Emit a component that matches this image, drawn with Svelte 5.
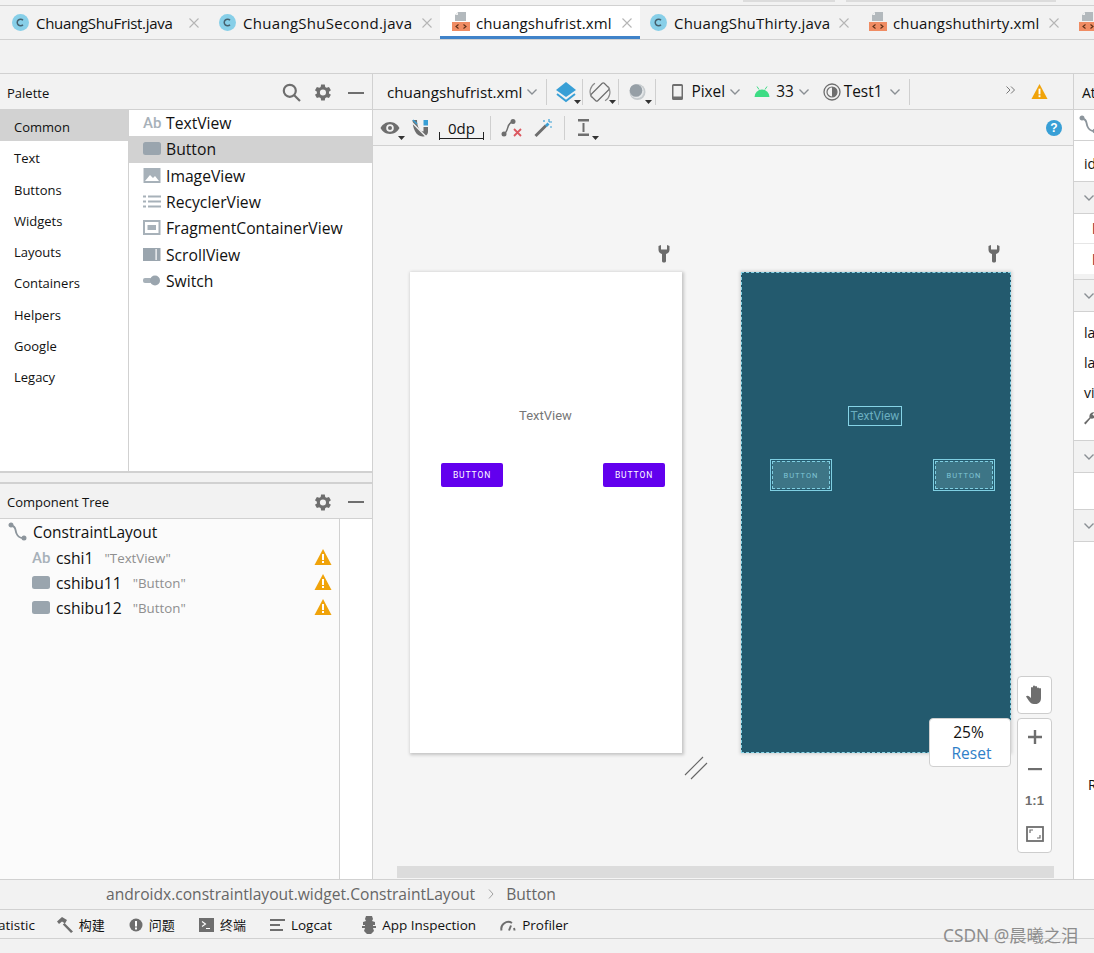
<script>
  const tabs = [
    { name: 'ChuangShuFrist.java', kind: 'java', w: 207, ls: -0.3 },
    { name: 'ChuangShuSecond.java', kind: 'java', w: 233, ls: 0.3 },
    { name: 'chuangshufrist.xml', kind: 'xml', w: 200, ls: 0.1 },
    { name: 'ChuangShuThirty.java', kind: 'java', w: 217, ls: 0.2, pad: 10 },
    { name: 'chuangshuthirty.xml', kind: 'xml', w: 210, ls: 0.15 },
    { name: '', kind: 'xml', w: 27 }
  ];
  const activeTab = 2;
  const categories = ['Common', 'Text', 'Buttons', 'Widgets', 'Layouts', 'Containers', 'Helpers', 'Google', 'Legacy'];
  const widgets = [
    { name: 'TextView', icon: 'ab' },
    { name: 'Button', icon: 'btn', selected: true },
    { name: 'ImageView', icon: 'img' },
    { name: 'RecyclerView', icon: 'list' },
    { name: 'FragmentContainerView', icon: 'frag' },
    { name: 'ScrollView', icon: 'scroll' },
    { name: 'Switch', icon: 'switch' }
  ];
  const tree = [
    { id: 'cshi1', text: '"TextView"', icon: 'ab' },
    { id: 'cshibu11', text: '"Button"', icon: 'btn' },
    { id: 'cshibu12', text: '"Button"', icon: 'btn' }
  ];
</script>

{#snippet widgetIcon(kind)}
  {#if kind === 'ab'}
    <span class="ab">Ab</span>
  {:else}
    <svg class="wicon" width="18" height="16" viewBox="0 0 18 16">
      {#if kind === 'btn'}
        <rect x="0" y="1" width="18" height="13" rx="2.500" fill="#9aa5ae" />
      {:else if kind === 'img'}
        <rect x="0.500" y="0" width="17" height="15" fill="#a7b1b9" />
        <path d="M2 13 L7 7 L10 10 L12 8 L16 13 Z" fill="#fff" />
      {:else if kind === 'list'}
        <path d="M0 1.500h3v2h-3zM5 1.500h13v2h-13zM0 6.500h3v2h-3zM5 6.500h13v2h-13zM0 11.500h3v2h-3zM5 11.500h13v2h-13z" fill="#a7b1b9" />
      {:else if kind === 'frag'}
        <path fill-rule="evenodd" d="M0 0h17.500v15h-17.500zM2 2v11h13.500v-11z" fill="#a7b1b9" />
        <rect x="4.500" y="5" width="8.500" height="5" fill="#a7b1b9" />
      {:else if kind === 'scroll'}
        <path d="M0 1h17.500v13h-17.500z" fill="#9aa5ae" />
        <rect x="12.500" y="2" width="1.200" height="11" fill="#fff" />
      {:else if kind === 'switch'}
        <rect x="0" y="5" width="9" height="5" rx="2" fill="#a7b1b9" />
        <circle cx="12" cy="7.500" r="5" fill="#9aa5ae" />
      {/if}
    </svg>
  {/if}
{/snippet}

{#snippet gear()}
  <svg width="21" height="21" viewBox="0 0 24 24">
    <path fill="#6e6e6e" d="M19.400 13a7.500 7.500 0 0 0 0-2l2.200-1.700-2.200-3.700-2.600 1a7.500 7.500 0 0 0-1.700-1L14.600 2.800h-4.200l-.5 2.800a7.500 7.500 0 0 0-1.700 1l-2.600-1-2.200 3.700L5.600 11a7.500 7.500 0 0 0 0 2l-2.200 1.700 2.200 3.700 2.600-1a7.500 7.500 0 0 0 1.700 1l.5 2.800h4.200l.5-2.800a7.500 7.500 0 0 0 1.700-1l2.600 1 2.200-3.700zM12.500 15.500a3.500 3.500 0 1 1 0-7 3.500 3.500 0 0 1 0 7z" />
  </svg>
{/snippet}

{#snippet warn(size)}
  <svg width={size} height={size} viewBox="0 0 18 18">
    <path d="M9 1 L17.500 17 H0.500 Z" fill="#f0a30a" />
    <rect x="8" y="6" width="2" height="6" fill="#fff" />
    <rect x="8" y="13" width="2" height="2" fill="#fff" />
  </svg>
{/snippet}

{#snippet layoutIcon()}
  <svg width="20" height="20" viewBox="0 0 20 20" fill="none" stroke="#8c959c" stroke-width="1.800">
    <circle cx="3" cy="3" r="1.600" fill="#8c959c" />
    <path d="M4 4 C8 4 7 8 8.500 11.500 C10 15 12 16 15 16" />
    <circle cx="16" cy="16" r="1.600" fill="#8c959c" />
  </svg>
{/snippet}

{#snippet chevron()}
  <svg class="chev" width="10" height="6" viewBox="0 0 10 6" fill="none" stroke="#8a8f94" stroke-width="1.400"><path d="M0.500 0.500 L5 5 L9.500 0.500" /></svg>
{/snippet}

{#snippet wrench()}
  <svg width="12" height="18" viewBox="0 0 12 18"><path fill="#6b6b6b" d="M0.500 1 V5 C0.500 7.500 2.500 8.500 4 9 V16 C4 18 8 18 8 16 V9 C9.500 8.500 11.500 7.500 11.500 5 V1 L9 0 V4.500 H3 V0 Z" /></svg>
{/snippet}

{#snippet caret()}
  <svg class="caret" width="7" height="4" viewBox="0 0 7 4"><path d="M0 0h7l-3.500 4z" fill="#333" /></svg>
{/snippet}

<div class="ide">
  <div class="topstrip">
    <span class="stub a"></span>
    <span class="stub b"></span>
  </div>

  <div class="tabs">
    {#each tabs as tab, i}
      <div class="tab" class:active={i === activeTab} style="width: {tab.w}px; padding-left: {tab.pad ?? 12}px">
        {#if tab.kind === 'java'}
          <svg width="17" height="17" viewBox="0 0 17 17" class="ticon">
            <circle cx="8.500" cy="8.500" r="8.500" fill="#87cfe8" />
            <path d="M11 6.300 A3.300 3.300 0 1 0 11 10.700" fill="none" stroke="#45606e" stroke-width="1.500" />
          </svg>
        {:else}
          <svg width="18" height="20" viewBox="0 0 18 20" class="ticon xml">
            <path d="M6 0 H14 V9 H3 V3 Z" fill="#b3b9bd" />
            <path d="M6 0 V3 H3 Z" fill="#f2f2f2" />
            <rect x="0" y="10" width="18" height="9" fill="#f08c63" />
            <path d="M6.500 12.500 L4 14.500 L6.500 16.500 M11.500 12.500 L14 14.500 L11.500 16.500" fill="none" stroke="#5b2f18" stroke-width="1.100" />
          </svg>
        {/if}
        {#if tab.name}
          <span class="tname" style="letter-spacing: {tab.ls}px">{tab.name}</span>
          <svg class="tclose" width="10" height="10" viewBox="0 0 10 10" stroke="#b5b5b5" stroke-width="1.100"><path d="M0.500 0.500 L9.500 9.500 M9.500 0.500 L0.500 9.500" /></svg>
        {/if}
      </div>
    {/each}
  </div>

  <div class="toolstrip"></div>

  <div class="main">
    <aside class="left">
      <div class="phead pal-head">
        <span class="ptitle">Palette</span>
        <span class="hicons">
          <svg class="search" width="19" height="19" viewBox="0 0 19 19" fill="none" stroke="#6e6e6e" stroke-width="2.200"><circle cx="7.800" cy="7.800" r="6" /><path d="M12 12 L18 18" /></svg>
          {@render gear()}
          <span class="minus"></span>
        </span>
      </div>
      <div class="palette">
        <ul class="cats">
          {#each categories as c, i}
            <li class:sel={i === 0}>{c}</li>
          {/each}
        </ul>
        <ul class="widgets">
          {#each widgets as w}
            <li class:sel={w.selected}>
              <span class="wslot">{@render widgetIcon(w.icon)}</span>
              {w.name}
            </li>
          {/each}
        </ul>
      </div>
      <div class="splitter"></div>
      <div class="phead tree-head">
        <span class="ptitle">Component Tree</span>
        <span class="hicons">
          {@render gear()}
          <span class="minus"></span>
        </span>
      </div>
      <div class="treebody">
        <div class="treelist">
          <div class="troot">
            {@render layoutIcon()}
            <span>ConstraintLayout</span>
          </div>
          {#each tree as t}
            <div class="trow">
              <span class="wslot">{@render widgetIcon(t.icon)}</span>
              <span class="tid">{t.id}</span>
              <span class="ttext">{t.text}</span>
              <span class="twarn">{@render warn(18)}</span>
            </div>
          {/each}
        </div>
        <div class="gutter"></div>
      </div>
    </aside>

    <section class="center">
      <div class="bar one">
        <span class="file">chuangshufrist.xml {@render chevron()}</span>
        <span class="sep s1"></span>
        <span class="tool layers">
          <svg width="24" height="24" viewBox="0 0 24 24">
            <path d="M12 2 L22 10 L12 17 L2 10 Z" fill="#389fd6" />
            <path d="M3 14 L12 21 L21 14" fill="none" stroke="#389fd6" stroke-width="2" />
          </svg>
          {@render caret()}
        </span>
        <span class="sep s2"></span>
        <span class="tool rotate">
          <svg width="22" height="24" viewBox="0 0 24 26" fill="none" stroke="#6e6e6e" stroke-width="1.300">
            <rect x="7" y="3" width="10" height="20" rx="1.500" transform="rotate(45 12 13)" />
            <path d="M3 19 A11 11 0 0 1 6.500 3.500 M21 7 A11 11 0 0 1 17.500 22.500" stroke="#8a8a8a" />
          </svg>
          {@render caret()}
        </span>
        <span class="sep s3"></span>
        <span class="tool moon">
          <svg width="20" height="20" viewBox="0 0 20 20">
            <circle cx="9.500" cy="10" r="8" fill="#c6cbce" />
            <circle cx="9" cy="9.500" r="6.800" fill="#e4e7e9" />
            <circle cx="8" cy="8.500" r="6.300" fill="#969fa6" />
          </svg>
          {@render caret()}
        </span>
        <span class="sep s4"></span>
        <span class="dev pixel">
          <svg width="11" height="16" viewBox="0 0 11 16"><path fill-rule="evenodd" d="M1.500 0h8A1.500 1.500 0 0 1 11 1.500v13A1.500 1.500 0 0 1 9.500 16h-8A1.500 1.500 0 0 1 0 14.500v-13A1.500 1.500 0 0 1 1.500 0zM1.500 2v10.500h8V2z" fill="#6e6e6e" /></svg>
          Pixel {@render chevron()}
        </span>
        <span class="dev api">
          <svg width="16" height="11" viewBox="0 0 16 11">
            <path d="M0.500 11 A7.500 7.500 0 0 1 15.500 11 Z" fill="#3ddc84" />
            <path d="M3 0.500 L5 3.500 M13 0.500 L11 3.500" stroke="#3ddc84" stroke-width="1" />
          </svg>
          33 {@render chevron()}
        </span>
        <span class="dev theme">
          <svg width="18" height="18" viewBox="0 0 18 18">
            <circle cx="9" cy="9" r="8" fill="none" stroke="#6e6e6e" stroke-width="1.300" />
            <path d="M9 4 A5 5 0 0 1 9 14 Z" fill="#6e6e6e" />
            <circle cx="9" cy="9" r="5" fill="none" stroke="#6e6e6e" stroke-width="1.200" />
          </svg>
          Test1 {@render chevron()}
        </span>
        <span class="sep s5"></span>
        <svg class="more" width="9" height="8" viewBox="0 0 9 8" fill="none" stroke="#777" stroke-width="1"><path d="M0.500 0.500 L4 4 L0.500 7.500 M5 0.500 L8.500 4 L5 7.500" /></svg>
        <span class="barwarn">{@render warn(17)}</span>
      </div>

      <div class="bar two">
        <span class="t2 eye">
          <svg width="20" height="14" viewBox="0 0 20 14"><path fill-rule="evenodd" d="M10 1C5.500 1 2 4 0.500 7 2 10 5.500 13 10 13s8-3 9.500-6C18 4 14.500 1 10 1zm0 9.800a3.800 3.800 0 1 1 0-7.600 3.800 3.800 0 0 1 0 7.600z" fill="#6e6e6e" /><circle cx="10" cy="7" r="2" fill="#6e6e6e" /></svg>
          {@render caret()}
        </span>
        <span class="t2 magnet">
          <svg width="18" height="18" viewBox="0 0 18 18">
            <path d="M1.500 1 H6 C6 8 9 12.500 12.500 12.500 V8 H17 V12.500 C17 16 14.500 17.500 11.500 17.500 C5 17.500 1.500 9 1.500 1 Z" fill="#6e6e6e" />
            <path d="M0.500 3 L15 17.500" stroke="#f2f2f2" stroke-width="1.400" />
            <rect x="12.500" y="1" width="4.500" height="5.500" fill="#389fd6" />
            <path d="M2 1 L6 5" stroke="#389fd6" stroke-width="1.400" />
          </svg>
        </span>
        <span class="margin">0dp</span>
        <span class="sep short first-short"></span>
        <span class="t2 wire">
          <svg width="22" height="20" viewBox="0 0 22 20">
            <path d="M2 16 C8 16 5 4 12 4" fill="none" stroke="#6e6e6e" stroke-width="1.500" />
            <circle cx="3" cy="16" r="2.500" fill="#6e6e6e" /><circle cx="12" cy="3.500" r="2.500" fill="#6e6e6e" />
            <path d="M13 11 L20 18 M20 11 L13 18" stroke="#db5860" stroke-width="1.800" />
          </svg>
        </span>
        <span class="t2 wand">
          <svg width="20" height="20" viewBox="0 0 20 20">
            <path d="M1.500 18 L12 7.500" stroke="#6e6e6e" stroke-width="3" />
            <path d="M11 7 L13.500 4.500 L15.500 6.500 L13 9 Z" fill="#389fd6" />
            <path d="M15 1v3M18 4h-3M18 9h-2M10 2v2" stroke="#389fd6" stroke-width="1.200" />
          </svg>
        </span>
        <span class="sep short second-short"></span>
        <span class="t2 guide">
          <svg width="12" height="20" viewBox="0 0 12 20"><path d="M0 1h11v2.500H0zM0 15.500h11V18H0zM4.500 5h2v9h-2z" fill="#6e6e6e" /></svg>
          {@render caret()}
        </span>
        <svg class="help" width="16" height="16" viewBox="0 0 16 16"><circle cx="8" cy="8" r="8" fill="#389fd6" /><text x="8" y="12" text-anchor="middle" font-size="12" font-weight="700" fill="#fff" font-family="Liberation Sans, sans-serif">?</text></svg>
      </div>

      <div class="canvas">
        <span class="wr w1">{@render wrench()}</span>
        <span class="wr w2">{@render wrench()}</span>

        <div class="screen design">
          <span class="dtext">TextView</span>
          <span class="dbtn b1">BUTTON</span>
          <span class="dbtn b2">BUTTON</span>
        </div>
        <svg class="resize" width="24" height="24" viewBox="0 0 24 24" stroke="#666" stroke-width="1.100"><path d="M1 19 L19 1 M7 23 L23 7" /></svg>

        <div class="screen blueprint">
          <span class="btext">TextView</span>
          <span class="bbtn b1"><span>BUTTON</span></span>
          <span class="bbtn b2"><span>BUTTON</span></span>
        </div>

        <div class="zoomlabel">
          <span class="pct">25%</span>
          <span class="reset">Reset</span>
        </div>

        <div class="zbox hand">
          <svg width="22" height="22" viewBox="0 0 22 22"><path fill="#6e6e6e" d="M7 10V4a1 1 0 0 1 2 0V2.500a1 1 0 0 1 2 0V3a1 1 0 0 1 2 0v1.500a1 1 0 0 1 2 0V5a1 1 0 0 1 2 0v9c0 3.500-2 6-5.500 6H10c-2.500 0-3.500-1-5-3L2 12.500c.8-1.300 2.300-1 3.300 0L7 14z" /></svg>
        </div>
        <div class="zbox controls">
          <svg width="14" height="14" viewBox="0 0 14 14"><path d="M5.800 0h2.400v5.800H14v2.400H8.200V14H5.800V8.200H0V5.800h5.800z" fill="#6e6e6e" /></svg>
          <svg width="14" height="14" viewBox="0 0 14 14"><rect y="6" width="14" height="2.200" fill="#6e6e6e" /></svg>
          <span class="one1">1:1</span>
          <svg width="18" height="16" viewBox="0 0 18 16"><rect x="1" y="1" width="16" height="14" fill="none" stroke="#6e6e6e" stroke-width="1.800" /><path d="M4 7V4h3M14 9v3h-3" fill="none" stroke="#6e6e6e" stroke-width="1.200" /></svg>
        </div>

        <div class="hscroll"></div>
      </div>
    </section>

    <aside class="attrs">
      <div class="ahead">At</div>
      <div class="arow icon">{@render layoutIcon()}</div>
      <div class="arow idrow">id</div>
      <div class="asec">{@render chevron()}</div>
      <div class="arow red">l</div>
      <div class="arow red last">l</div>
      <div class="asec">{@render chevron()}</div>
      <div class="ablock">
        <span>la</span>
        <span>la</span>
        <span>vi</span>
        <svg width="14" height="14" viewBox="0 0 14 14"><path d="M1 12 L6.500 6.500 C5.800 3.500 8 0.800 11.500 1.300 L9.300 3.500 L10.500 4.800 L12.800 2.600 C13.300 6 10.500 8.300 7.500 7.500 L2.500 13.500 Z" fill="#6b6b6b" /></svg>
      </div>
      <div class="asec">{@render chevron()}</div>
      <div class="ablank"></div>
      <div class="asec">{@render chevron()}</div>
      <div class="arest"><span>R</span></div>
    </aside>
  </div>

  <div class="crumbs">
    <span>androidx.constraintlayout.widget.ConstraintLayout</span>
    <svg width="6" height="10" viewBox="0 0 6 10" fill="none" stroke="#a0a0a0" stroke-width="1"><path d="M1 0.500 L5 5 L1 9.500" /></svg>
    <span class="crumb-last">Button</span>
  </div>

  <div class="status">
    <span class="st first">atistic</span>
    <span class="st cjk hammer">
      <svg width="17" height="16" viewBox="0 0 17 16"><path d="M0 4.500 L5 0 L10 3 L8 6.500 L5 4.500 L2 7 Z M7.500 6 L16 14.500 L14 16 L5.800 7.500 Z" fill="#6e6e6e" /></svg>
      构建
    </span>
    <span class="st cjk">
      <svg width="14" height="14" viewBox="0 0 14 14"><circle cx="7" cy="7" r="6.500" fill="#6e6e6e" /><rect x="6" y="3" width="2" height="5.500" fill="#fff" /><rect x="6" y="9.500" width="2" height="2" fill="#fff" /></svg>
      问题
    </span>
    <span class="st cjk">
      <svg width="15" height="14" viewBox="0 0 15 14"><rect width="15" height="14" fill="#6e6e6e" /><path d="M3 3.500 L6.500 6 L3 8.500 M7 10.500h4" fill="none" stroke="#fff" stroke-width="1.100" /></svg>
      终端
    </span>
    <span class="st">
      <svg width="15" height="12" viewBox="0 0 15 12"><path d="M0 0h15v2H0zM0 5h10v2H0zM0 10h13v2H0z" fill="#6e6e6e" /></svg>
      Logcat
    </span>
    <span class="st app">
      <svg width="14" height="18" viewBox="0 0 14 18"><path d="M4 0h6l1 3-1 2 3 1v3h-2v1h3v2h-3l1 3-3 3H5l-3-3 1-3H0v-2h3V9H1V6l3-1-1-2z" fill="#6e6e6e" /></svg>
      App Inspection
    </span>
    <span class="st">
      <svg width="16" height="12" viewBox="0 0 16 12" fill="none" stroke="#6e6e6e" stroke-width="2"><path d="M1.500 11.500 A7 7 0 0 1 12 4" /><path d="M9 11.500 L11 6.500" /><path d="M14.500 11.500 A7 7 0 0 0 14 9" /></svg>
      Profiler
    </span>
  </div>

  <div class="bottom"></div>
  <span class="mark">CSDN @晨曦之泪</span>
</div>

<style>
  :global(body) {
    margin: 0;
    overflow: hidden;
  }

  .ide {
    position: relative;
    width: 1094px;
    height: 953px;
    display: flex;
    flex-direction: column;
    overflow: hidden;
    background: #f2f2f2;
    color: #111;
    font-family: "Open Sans", "Noto Sans", "Noto Sans CJK SC", sans-serif;
    font-size: 14px;
  }

  ul {
    list-style: none;
    margin: 0;
    padding: 0;
  }

  svg {
    flex: none;
    display: block;
  }

  /* top */
  .topstrip {
    height: 5px;
    display: flex;
    border-bottom: 1px solid #d1d1d1;
    flex: none;
  }

  .stub {
    height: 2px;
    background: #dcdcdc;
  }

  .stub.a {
    margin-left: 743px;
    width: 92px;
  }

  .stub.b {
    margin-left: 11px;
    width: 210px;
  }

  .tabs {
    height: 33px;
    display: flex;
    flex: none;
    border-bottom: 1px solid #d1d1d1;
  }

  .tab {
    flex: none;
    position: relative;
    display: flex;
    align-items: center;
    box-sizing: border-box;
    font-size: 15px;
  }

  .tab.active {
    background: #fff;
    box-shadow: inset 0 -3px 0 #4083c9;
  }

  .ticon {
    margin-right: 7px;
  }

  .ticon.xml {
    margin-top: -1px;
    margin-right: 6px;
  }

  .tclose {
    margin-left: auto;
    margin-right: 8px;
  }

  .toolstrip {
    height: 33px;
    flex: none;
    border-bottom: 1px solid #d1d1d1;
  }

  .main {
    flex: none;
    height: 805px;
    display: flex;
  }

  /* left */
  .left {
    width: 373px;
    flex: none;
    box-sizing: border-box;
    border-right: 1px solid #d1d1d1;
    display: flex;
    flex-direction: column;
  }

  .phead {
    flex: none;
    box-sizing: border-box;
    border-bottom: 1px solid #d1d1d1;
    display: flex;
    align-items: center;
    justify-content: space-between;
    padding: 2px 8px 0 7px;
  }

  .pal-head {
    height: 36px;
  }

  .tree-head {
    height: 35px;
  }

  .ptitle {
    font-size: 13px;
  }

  .hicons {
    display: flex;
    align-items: center;
    gap: 15px;
  }

  .search {
    margin-right: -4px;
  }

  .minus {
    width: 16px;
    height: 2px;
    background: #6e6e6e;
  }

  .palette {
    height: 361px;
    flex: none;
    display: flex;
    background: #fff;
  }

  .cats {
    width: 129px;
    flex: none;
    box-sizing: border-box;
    border-right: 1px solid #d1d1d1;
    background: #fff;
  }

  .cats li {
    height: 31.250px;
    box-sizing: border-box;
    padding-left: 14px;
    line-height: 34px;
    font-size: 13px;
  }

  .cats li.sel {
    background: #d2d2d2;
  }

  .widgets {
    flex: 1;
  }

  .widgets li {
    height: 26.300px;
    display: flex;
    align-items: center;
    font-size: 15.700px;
    padding-left: 14px;
  }

  .widgets li.sel {
    background: #d2d2d2;
  }

  .wslot {
    width: 23px;
    flex: none;
    display: flex;
    align-items: center;
  }

  .ab {
    color: #a7b1b9;
    font-weight: 500;
    font-size: 15px;
    font-family: Roboto, sans-serif;
  }

  .splitter {
    height: 13px;
    flex: none;
    box-sizing: border-box;
    border-top: 2px solid #d1d1d1;
    border-bottom: 2px solid #d1d1d1;
    background: #f2f2f2;
  }

  .treebody {
    flex: 1;
    display: flex;
    background: #fbfbfb;
  }

  .treelist {
    width: 339px;
    flex: none;
    box-sizing: border-box;
  }

  .gutter {
    flex: 1;
    border-left: 1px solid #d1d1d1;
    background: #fff;
  }

  .troot {
    height: 26px;
    display: flex;
    align-items: center;
    padding-left: 8px;
    gap: 5px;
    font-size: 15.500px;
  }

  .trow {
    height: 25px;
    display: flex;
    align-items: center;
    padding-left: 32px;
    font-size: 15.700px;
    position: relative;
  }

  .wslot + .tid {
    margin-left: 1px;
  }

  .ttext {
    margin-left: 11px;
    margin-top: 1px;
    color: #8f8f8f;
    font-size: 13.300px;
  }

  .twarn {
    position: absolute;
    left: 314px;
    top: 3px;
  }

  /* center */
  .center {
    flex: none;
    width: 701px;
    box-sizing: border-box;
    border-right: 1px solid #d1d1d1;
    display: flex;
    flex-direction: column;
  }

  .bar {
    height: 36px;
    flex: none;
    box-sizing: border-box;
    border-bottom: 1px solid #d1d1d1;
    display: flex;
    align-items: center;
  }

  .file {
    display: flex;
    align-items: center;
    gap: 5px;
    margin-left: 14px;
    font-size: 15.200px;
  }

  .sep {
    width: 1px;
    height: 26px;
    background: #cfcfcf;
    flex: none;
  }

  .sep.short {
    height: 24px;
  }

  .s1 { margin-left: 9px; }
  .s2 { margin-left: 4px; }
  .s3 { margin-left: 5px; }
  .s4 { margin-left: 6px; }
  .s5 { margin-left: 9px; }

  .tool {
    position: relative;
    width: 24px;
    height: 24px;
    flex: none;
  }

  .layers { margin-left: 7px; }
  .rotate { margin-left: 6px; }

  .moon {
    margin-left: 9px;
    width: 21px;
    height: 22px;
    padding-top: 2px;
  }

  .caret {
    position: absolute;
    right: -3px;
    bottom: 0;
  }

  .dev {
    display: flex;
    align-items: center;
    gap: 8px;
    font-size: 15.400px;
    flex: none;
  }

  .pixel {
    margin-left: 16px;
  }

  .pixel .chev {
    margin-left: -3px;
  }

  .api {
    margin-left: 14px;
    gap: 6px;
  }

  .api .chev {
    margin-left: -1px;
  }

  .theme {
    margin-left: 14px;
    gap: 3px;
  }

  .theme .chev {
    margin-left: 4px;
  }

  .more {
    margin-left: 96px;
    margin-top: -4px;
  }

  .barwarn {
    margin-left: 16px;
  }

  .bar.two {
    position: relative;
    padding-left: 7px;
  }

  .t2 {
    position: relative;
    display: flex;
    align-items: center;
    flex: none;
  }

  .eye {
    width: 20px;
    height: 20px;
  }

  .eye .caret {
    right: -5px;
    bottom: -2px;
  }

  .magnet {
    margin-left: 11px;
  }

  .margin {
    position: relative;
    flex: none;
    margin-left: 10px;
    width: 45px;
    height: 19px;
    box-sizing: border-box;
    border-bottom: 1px solid #222;
    font-size: 15px;
    line-height: 17px;
    text-align: center;
    top: 2px;
  }

  .margin::before,
  .margin::after {
    content: "";
    position: absolute;
    bottom: -2px;
    width: 1px;
    height: 8px;
    background: #222;
  }

  .margin::before { left: 0; }
  .margin::after { right: 0; }

  .first-short { margin-left: 6px; }
  .wire { margin-left: 10px; }
  .wand { margin-left: 11px; }
  .second-short { margin-left: 10px; }
  .guide { margin-left: 13px; height: 20px; }

  .guide .caret {
    right: -9px;
    bottom: -2px;
  }

  .help {
    position: absolute;
    left: 673px;
    top: 10px;
  }

  .canvas {
    flex: 1;
    position: relative;
    background: #f5f5f5;
  }

  .wr {
    position: absolute;
    top: 99px;
  }

  .w1 { left: 285px; }
  .w2 { left: 615px; }

  .screen {
    position: absolute;
    top: 126px;
    height: 481px;
  }

  .design {
    left: 37px;
    width: 272px;
    background: #fff;
    box-shadow: 1px 1px 3px 1px #c4c4c4;
  }

  .dtext {
    position: absolute;
    left: 109px;
    top: 136px;
    color: #777;
    font-family: Roboto, sans-serif;
    font-size: 13px;
  }

  .dbtn {
    position: absolute;
    top: 191px;
    width: 62px;
    height: 24px;
    border-radius: 2px;
    background: #6200ee;
    color: #fff;
    font-family: Roboto, sans-serif;
    font-size: 8.500px;
    letter-spacing: 0.900px;
    display: flex;
    align-items: center;
    justify-content: center;
  }

  .design .b1 { left: 31px; }
  .design .b2 { left: 193px; }

  .resize {
    position: absolute;
    left: 311px;
    top: 610px;
  }

  .blueprint {
    left: 368px;
    width: 270px;
    box-sizing: border-box;
    background: #235a6e;
    border: 1px dashed #86d3e6;
    box-shadow: 0 0 3px 1px #cfcfcf;
  }

  .btext {
    position: absolute;
    left: 106px;
    top: 133px;
    width: 54px;
    height: 20px;
    box-sizing: border-box;
    border: 1px solid #86d3e6;
    color: #6aaec0;
    font-family: Roboto, sans-serif;
    font-size: 12px;
    line-height: 18px;
    text-align: center;
    white-space: nowrap;
  }

  .bbtn {
    position: absolute;
    top: 186px;
    width: 62px;
    height: 32px;
    box-sizing: border-box;
    border: 1px solid #7fcfe2;
    padding: 1px;
  }

  .bbtn span {
    display: flex;
    align-items: center;
    justify-content: center;
    height: 100%;
    box-sizing: border-box;
    background: #3d7586;
    border: 1px dashed #7fcfe2;
    color: #7fc5d6;
    font-family: Roboto, sans-serif;
    font-size: 7.500px;
    letter-spacing: 1px;
  }

  .blueprint .b1 { left: 28px; }
  .blueprint .b2 { left: 191px; }

  .zoomlabel {
    position: absolute;
    left: 556px;
    top: 572px;
    width: 82px;
    height: 49px;
    box-sizing: border-box;
    background: #fff;
    border: 1px solid #d0d0d0;
    border-radius: 4px;
    display: flex;
    flex-direction: column;
    align-items: center;
    font-size: 15.500px;
    line-height: 21px;
    padding-top: 3px;
  }

  .pct {
    margin-right: 3px;
  }

  .reset {
    color: #2f80c8;
    padding-left: 3px;
  }

  .zbox {
    position: absolute;
    left: 644px;
    width: 35px;
    box-sizing: border-box;
    background: #fff;
    border: 1px solid #cdcdcd;
    border-radius: 4px;
    display: flex;
    flex-direction: column;
    align-items: center;
  }

  .hand {
    top: 530px;
    height: 38px;
    justify-content: center;
  }

  .controls {
    top: 572px;
    height: 135px;
    padding-top: 11px;
    gap: 18px;
  }

  .one1 {
    font-family: "Liberation Sans", sans-serif;
    font-weight: 700;
    font-size: 13px;
    line-height: 14px;
    color: #6e6e6e;
  }

  .hscroll {
    position: absolute;
    left: 24px;
    top: 720px;
    width: 657px;
    height: 12px;
    background: #dcdcdc;
  }

  /* right */
  .attrs {
    flex: 1;
    min-width: 0;
    display: flex;
    flex-direction: column;
    background: #fff;
    font-size: 14px;
  }

  .ahead {
    height: 36px;
    flex: none;
    box-sizing: border-box;
    border-bottom: 1px solid #d1d1d1;
    background: #f2f2f2;
    padding: 9px 0 0 8px;
  }

  .arow {
    height: 30px;
    flex: none;
    box-sizing: border-box;
    border-bottom: 1px solid #e6e6e6;
    padding-left: 8px;
    line-height: 29px;
    display: flex;
    align-items: center;
    overflow: hidden;
  }

  .arow.icon {
    height: 31px;
    padding-left: 5px;
    border-bottom-color: #d1d1d1;
  }

  .arow.idrow {
    height: 40px;
    padding: 4px 0 0 10px;
    border-bottom: 0;
  }

  .arow.red {
    color: #8c1c30;
    padding-left: 18px;
  }

  .arow.last {
    height: 35px;
    border-bottom: 5px solid #f2f2f2;
  }

  .asec {
    height: 33px;
    flex: none;
    box-sizing: border-box;
    background: #f2f2f2;
    border-top: 1px solid #d1d1d1;
    border-bottom: 1px solid #d1d1d1;
    display: flex;
    align-items: center;
    padding-left: 10px;
  }

  .ablock {
    height: 128px;
    flex: none;
    box-sizing: border-box;
    display: flex;
    flex-direction: column;
    padding: 6px 0 0 10px;
    line-height: 30px;
  }

  .ablock svg {
    margin: 3px 0 0 -1px;
  }

  .ablank {
    height: 36px;
    flex: none;
  }

  .arest {
    flex: 1;
    position: relative;
  }

  .arest span {
    position: absolute;
    left: 14px;
    top: 233px;
  }

  /* bottom */
  .crumbs {
    height: 31px;
    flex: none;
    box-sizing: border-box;
    border-top: 1px solid #d1d1d1;
    border-bottom: 1px solid #d1d1d1;
    display: flex;
    align-items: center;
    gap: 13px;
    padding: 0 0 1px 106px;
    font-size: 15.600px;
    color: #666;
  }

  .crumb-last {
    margin-left: -1px;
  }

  .status {
    height: 29px;
    flex: none;
    box-sizing: border-box;
    border-bottom: 1px solid #d1d1d1;
    display: flex;
    align-items: center;
    font-size: 13.500px;
    gap: 24px;
    padding-top: 1px;
  }

  .st {
    display: flex;
    align-items: center;
    gap: 6px;
  }

  .st.first {
    margin-left: -2px;
    margin-right: -2px;
  }

  .st.cjk {
    font-size: 13px;
  }

  .st.hammer {
    gap: 5px;
  }

  .st.app {
    margin-left: 6px;
  }

  .bottom {
    flex: 1;
  }

  .mark {
    position: absolute;
    left: 943px;
    top: 922px;
    color: #8d8d8d;
    font-size: 17.300px;
    font-family: "Noto Sans", "Noto Sans CJK SC", sans-serif;
    white-space: nowrap;
  }
</style>
